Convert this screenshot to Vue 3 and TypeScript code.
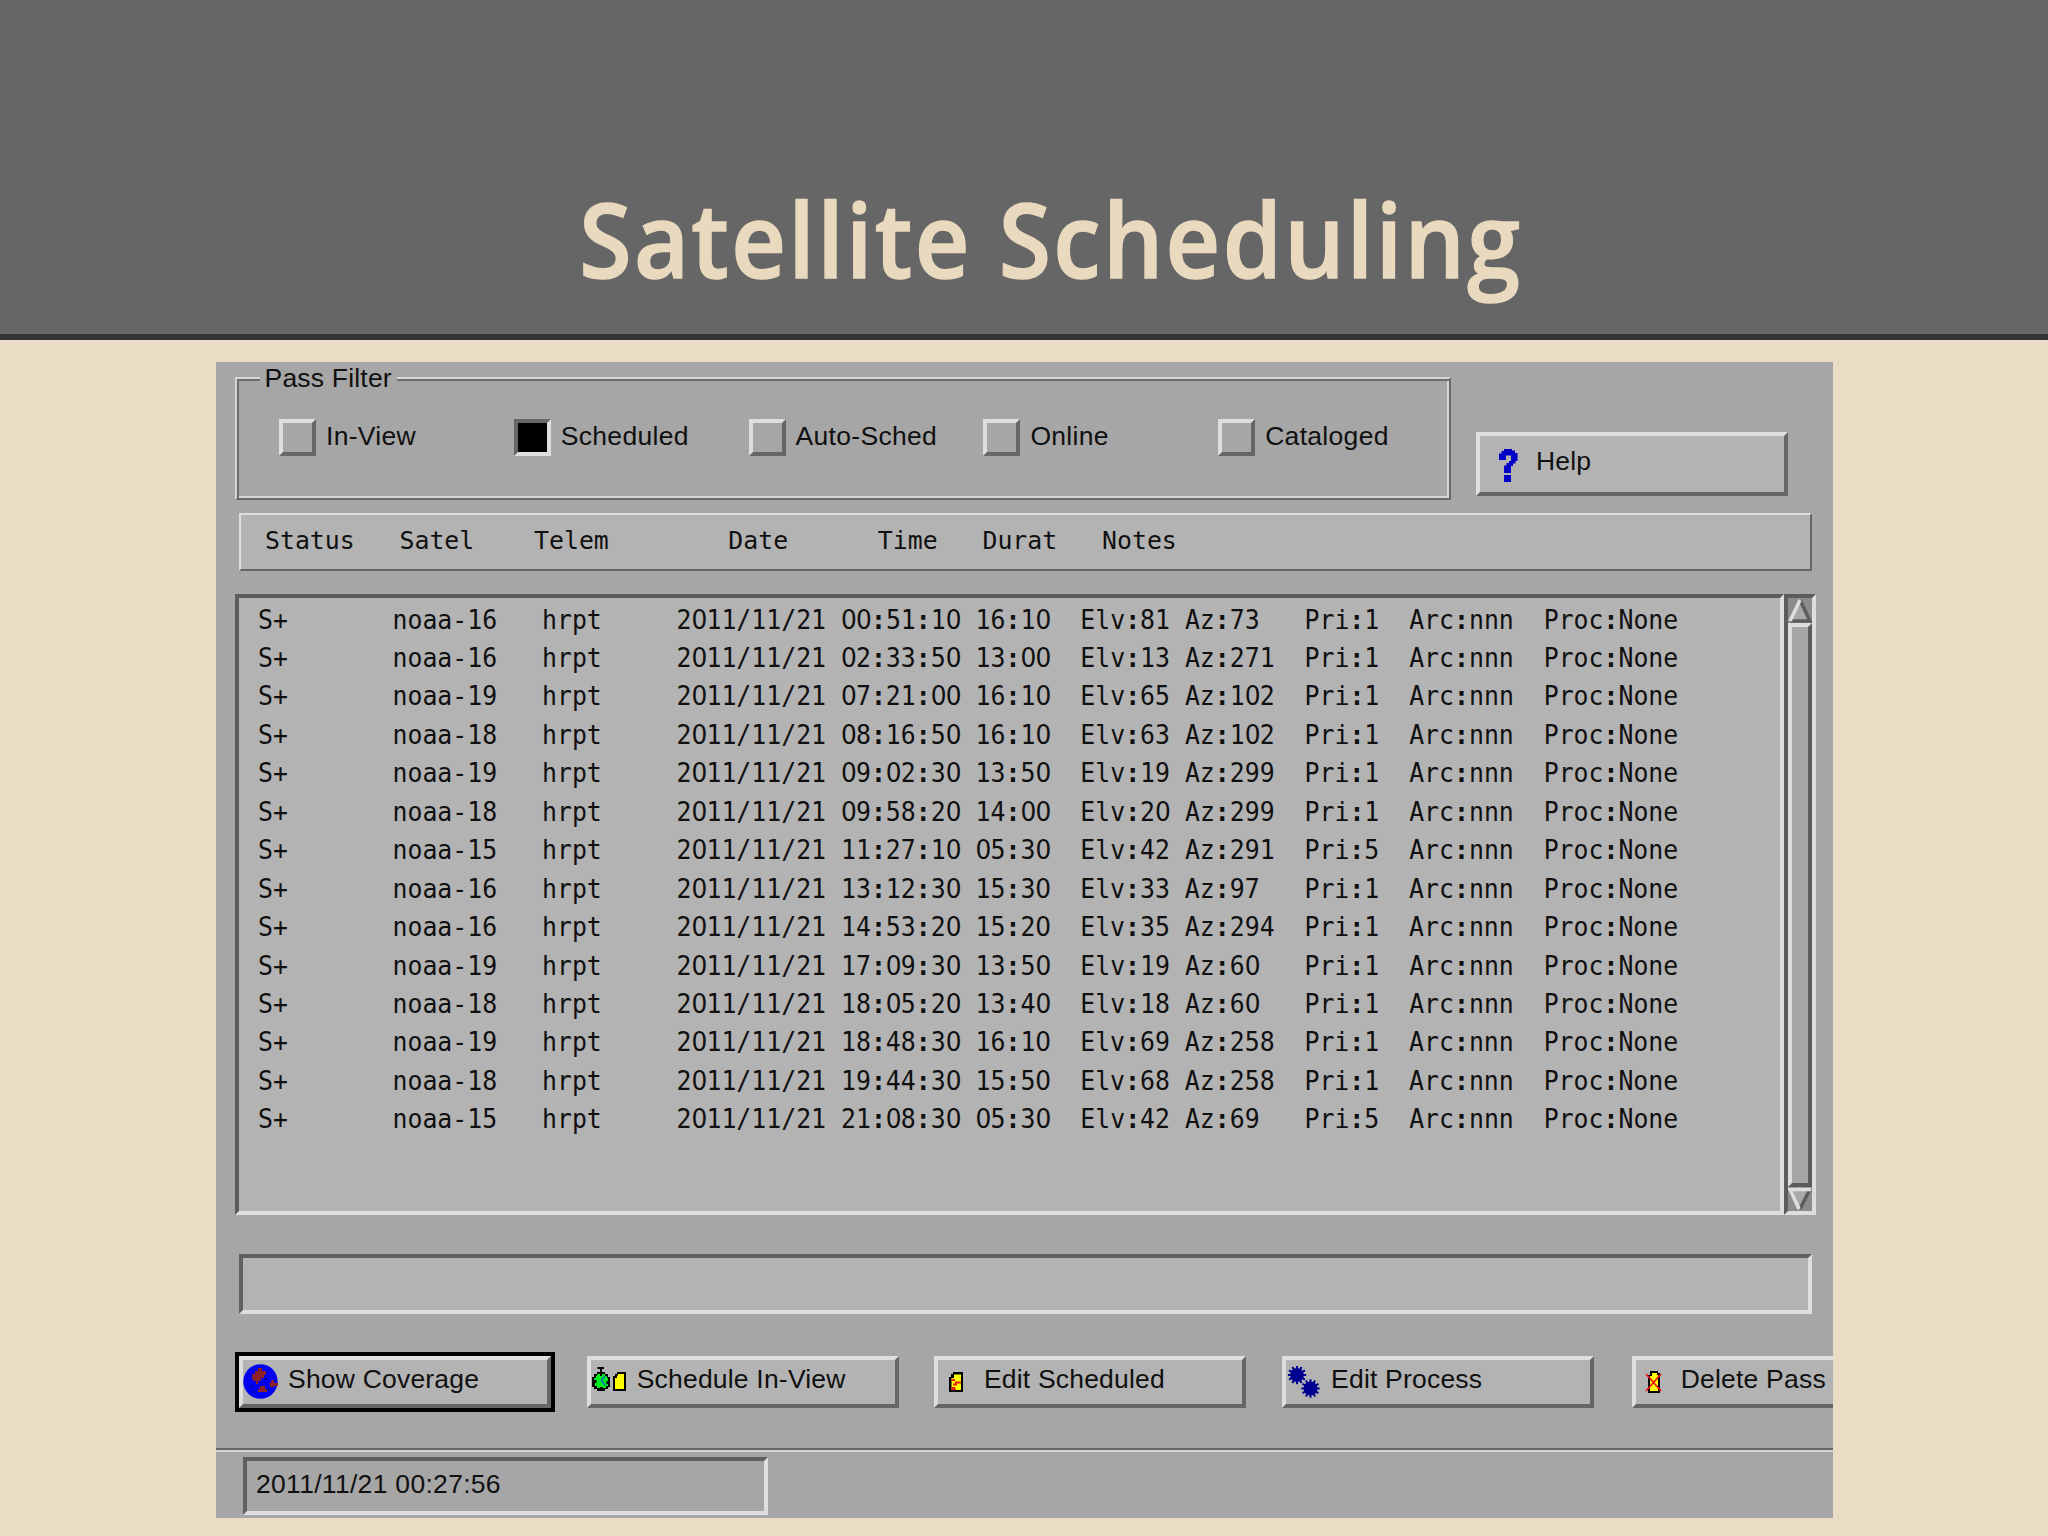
<script setup lang="ts">
interface Pass {
  sat: string
  time: string
  dur: string
  elv: number
  az: number
  pri: number
}

interface Token {
  text: string
  kind: string
}

const filters = [
  { label: 'In-View', on: false },
  { label: 'Scheduled', on: true },
  { label: 'Auto-Sched', on: false },
  { label: 'Online', on: false },
  { label: 'Cataloged', on: false },
]

const header =
  'Status'.padEnd(9) + 'Satel'.padEnd(9) + 'Telem'.padEnd(13) + 'Date'.padEnd(10) +
  'Time'.padEnd(7) + 'Durat'.padEnd(8) + 'Notes'

const pass = (sat: string, time: string, dur: string, elv: number, az: number, pri = 1): Pass =>
  ({ sat, time, dur, elv, az, pri })

const passes: Pass[] = [
  pass('noaa-16', '00:51:10', '16:10', 81, 73),
  pass('noaa-16', '02:33:50', '13:00', 13, 271),
  pass('noaa-19', '07:21:00', '16:10', 65, 102),
  pass('noaa-18', '08:16:50', '16:10', 63, 102),
  pass('noaa-19', '09:02:30', '13:50', 19, 299),
  pass('noaa-18', '09:58:20', '14:00', 20, 299),
  pass('noaa-15', '11:27:10', '05:30', 42, 291, 5),
  pass('noaa-16', '13:12:30', '15:30', 33, 97),
  pass('noaa-16', '14:53:20', '15:20', 35, 294),
  pass('noaa-19', '17:09:30', '13:50', 19, 60),
  pass('noaa-18', '18:05:20', '13:40', 18, 60),
  pass('noaa-19', '18:48:30', '16:10', 69, 258),
  pass('noaa-18', '19:44:30', '15:50', 68, 258),
  pass('noaa-15', '21:08:30', '05:30', 42, 69, 5),
]

const line = (p: Pass): string =>
  'S+'.padEnd(9) + p.sat.padEnd(10) + 'hrpt'.padEnd(9) + '2011/11/21 ' + p.time + ' ' + p.dur +
  '  Elv:' + p.elv + ' ' + ('Az:' + p.az).padEnd(8) + 'Pri:' + p.pri + '  Arc:nnn  Proc:None'

// Zeros are drawn open and colons heavy, so they get their own runs.
const tokens = (s: string): Token[] =>
  (s.match(/0+|:|[^0:]+/g) ?? []).map((text) => ({
    text,
    kind: text[0] === '0' ? 'zero' : text === ':' ? 'colon' : 'plain',
  }))

const rows = passes.map((p) => tokens(line(p)))

const gearTeeth = Array.from({ length: 12 }, (_, i) => i * 30)
</script>

<template>
  <main class="slide">
    <header class="banner"><h1>Satellite Scheduling</h1></header>
    <section class="window">
      <div class="top">
        <div class="filter">
          <span class="legend">Pass Filter</span>
          <label v-for="f in filters" :key="f.label" class="check">
            <i class="box" :class="{ on: f.on }"></i>{{ f.label }}
          </label>
        </div>
        <button class="btn help">
          <svg class="icon" width="20" height="34" viewBox="0 0 20 34" fill="#0000c8">
            <path d="M5 0H13V1.500H16V4H18.500V12H16.500V14.500H14V17H12V24H5V16.500H7.500V14H10V12H12V6.500H7V11H0V4.500H2.500V2H5Z" />
            <path d="M5 26H12V33H5Z" />
          </svg>
          <span>Help</span>
        </button>
      </div>

      <div class="columns mono">{{ header }}</div>

      <div class="listing">
        <div class="list">
          <div v-for="(row, i) in rows" :key="i" class="row mono"><span v-for="(t, j) in row" :key="j" :class="t.kind">{{ t.text }}</span></div>
        </div>
        <div class="scroll">
          <svg width="24" height="25" viewBox="0 0 24 25">
            <path d="M12 1L23 24H1Z" fill="#a8a8a8" />
            <path d="M12 2L22 23H2" fill="none" stroke="#5c5c5c" stroke-width="3.500" />
            <path d="M12 2L2 23" stroke="#dedede" stroke-width="3.500" />
          </svg>
          <div class="thumb"></div>
          <svg width="24" height="24" viewBox="0 0 24 24">
            <path d="M1 1H23L12 23Z" fill="#a8a8a8" />
            <path d="M22 2L12 22" stroke="#5c5c5c" stroke-width="3.500" />
            <path d="M23 2.500H2L11 22" fill="none" stroke="#dedede" stroke-width="3.500" />
          </svg>
        </div>
      </div>

      <div class="message"></div>

      <div class="actions">
        <div class="default">
          <button class="btn">
            <svg class="icon globe" width="36" height="36" viewBox="0 0 36 36">
              <ellipse cx="17.500" cy="17.500" rx="17.200" ry="17.200" fill="#0000f0" />
              <path d="M15 4H19V7H23V11H21V14H18V17H15V20H13V17H10V15H9V10H12V7H15ZM28 16H31V19H35V22H31V23H27V20H26V19H28ZM17 22H22V25H24V28H15V25H17Z" fill="#8c2028" />
              <path d="M21 14H24V16H21ZM7 21H9V24H7ZM24 24H26V26H24ZM10 27H12V29H10Z" fill="#0000a0" />
            </svg>
            <span>Show Coverage</span>
          </button>
        </div>
        <button class="btn">
          <svg class="icon timer" width="36" height="26" viewBox="0 0 36 26">
            <path d="M6.500 0H13V2H11V5H14V7H17V10H19V20H17V22H14V24H6V22H3V20H1V10H3V7H6V5H9V2H6.500Z" fill="#000" />
            <path d="M6 7H9V9H11V7H14V9H16V11H17V14H15.500V17H17V19H15V21H12V20H9V21H6V19H4V16H5.500V13H3V11H5V9H6Z" fill="#00ee20" />
            <path d="M14 9L10.500 13.500L14.500 18.500" fill="none" stroke="#0878a8" stroke-width="1.800" />
            <path d="M26 5H35V24H22V9H24V7H26Z" fill="#000" />
            <path d="M27 7H33V22H24V11H26V8.500H27Z" fill="#ffff00" />
          </svg>
          <span>Schedule In-View</span>
        </button>
        <button class="btn">
          <svg class="icon doc" width="15" height="21" viewBox="0 0 15 21">
            <path d="M4 0H14V20H0V5H2V2H4Z" fill="#000" />
            <path d="M5 2.500H12V18H2.500V6H5Z" fill="#ffff00" />
            <path d="M2.500 7H6V9H2.500ZM6 9.500H12V11.500H8V13.500H4V11.500H6ZM2.500 15H7V18H2.500Z" fill="#ee2010" />
            <path d="M6 15H8V16.500H6Z" fill="#ffff00" />
          </svg>
          <span>Edit Scheduled</span>
        </button>
        <button class="btn">
          <svg class="icon gears" width="32" height="32" viewBox="0 0 32 32" fill="#000090">
            <g v-for="c in [9, 22.500]" :key="c" :transform="`translate(${c} ${c})`">
              <circle r="6.900" />
              <rect v-for="a in gearTeeth" :key="a" x="-1" y="-9.200" width="2" height="4" :transform="`rotate(${a})`" />
            </g>
          </svg>
          <span>Edit Process</span>
        </button>
        <button class="btn last">
          <svg class="icon del" width="18" height="23" viewBox="0 0 18 23">
            <path d="M5 0H13V2H15V22H3V4H5Z" fill="#000" />
            <path d="M7 2H12V4H13V20H5V5H7Z" fill="#ffff00" />
            <path d="M1 3L16 20M16 3L1 20" stroke="#ee1010" stroke-width="1.700" />
            <path d="M7 2H12V6H7ZM6.500 16H12V20H6.500Z" fill="#ffff00" />
          </svg>
          <span>Delete Pass</span>
        </button>
      </div>

      <footer class="status"><div class="clock">2011/11/21 00:27:56</div></footer>
    </section>
  </main>
</template>

<style>
body {
  margin: 0;
  background: #eaddc6;
}
</style>

<style scoped>
.slide {
  width: 2048px;
  height: 1536px;
  overflow: hidden;
  background: #eaddc6;
  font: 26.5px/30px 'Liberation Sans', Arial, sans-serif;
  letter-spacing: 0.2px;
  color: #101010;
}
.banner {
  box-sizing: border-box;
  height: 340px;
  background: #666;
  border-bottom: 6px solid #333;
  padding-left: 53px;
  display: flex;
  justify-content: center;
  box-shadow: 0 2px 0 #f0dccf;
}
h1 {
  margin: 168px 0 0;
  font: 600 103px/140px 'Open Sans', 'Noto Sans', sans-serif;
  letter-spacing: 2.5px;
  white-space: nowrap;
  color: #e9d9be;
  -webkit-text-stroke: 1.5px #e9d9be;
  transform: scaleX(0.923);
}
.window {
  box-sizing: border-box;
  width: 1617px;
  height: 1156px;
  margin: 22px 0 0 216px;
  padding: 15px 0 0 19px;
  background: #a6a6a6;
  overflow: hidden;
  display: flex;
  flex-direction: column;
}
.window > * {
  flex: none;
}
.top {
  display: flex;
  height: 124px;
}
.filter {
  position: relative;
  box-sizing: border-box;
  width: 1216px;
  height: 123px;
  border: 2px solid;
  border-color: #d6d6d6 #686868 #686868 #d6d6d6;
  box-shadow: inset 2px 2px 0 #6c6c6c, inset -2px -2px 0 #d6d6d6;
  padding: 40px 0 0 42px;
  display: flex;
}
.legend {
  position: absolute;
  left: 22.5px;
  top: -16px;
  padding: 0 4px 0 5px;
  width: 128px;
  background: #a6a6a6;
  white-space: nowrap;
}
.check {
  flex: none;
  display: flex;
  width: 234.8px;
  line-height: 34px;
  letter-spacing: 0.3px;
  white-space: nowrap;
}
.box {
  box-sizing: border-box;
  width: 37px;
  height: 37px;
  margin-right: 10px;
  border: 4px solid;
  border-color: #dedede #666 #666 #dedede;
}
.box.on {
  background: #000;
  border-color: #666 #dedede #dedede #666;
}
.btn {
  box-sizing: border-box;
  flex: none;
  width: 312px;
  height: 52px;
  margin: 0;
  padding: 0;
  border: 4px solid;
  border-color: #dedede #666 #666 #dedede;
  background: #b3b3b3;
  color: inherit;
  font: inherit;
  letter-spacing: inherit;
  text-align: left;
  white-space: nowrap;
  display: flex;
}
.icon {
  flex: none;
}
.help {
  height: 64px;
  margin: 55px 0 0 25px;
}
.help .icon {
  margin: 13px 17px 0 19px;
}
.help span {
  margin-top: 10px;
}
.mono {
  font: 24.85px/38.46px 'DejaVu Sans Mono', monospace;
  letter-spacing: -0.01px;
  white-space: pre;
}
.columns {
  box-sizing: border-box;
  width: 1573px;
  height: 58px;
  margin: 12px 0 0 4px;
  padding: 7px 0 0 24px;
  border: 2px solid;
  border-color: #dedede #666 #666 #dedede;
  background: #b3b3b3;
}
.listing {
  display: flex;
  height: 621px;
  margin-top: 23px;
}
.list {
  box-sizing: border-box;
  width: 1549px;
  border: 4px solid;
  border-color: #5c5c5c #dedede #dedede #5c5c5c;
  background: #b3b3b3;
  padding: 3.5px 0 0 19px;
}
.row {
  height: 38.46px;
  transform: scaleY(1.06);
}
.zero {
  font-family: 'DejaVu Sans', sans-serif;
  letter-spacing: -0.034em;
}
.colon {
  font-weight: 700;
}
.scroll {
  box-sizing: border-box;
  width: 32px;
  border: 4px solid;
  border-color: #5c5c5c #dedede #dedede #5c5c5c;
  background: #8c8c8c;
  display: flex;
  flex-direction: column;
}
.thumb {
  flex: 1;
  border: 4px solid;
  border-color: #dedede #5c5c5c #5c5c5c #dedede;
  background: #a6a6a6;
}
.message {
  box-sizing: border-box;
  width: 1573px;
  height: 60px;
  margin: 39px 0 0 4px;
  border: 4px solid;
  border-color: #606060 #dedede #dedede #606060;
  background: #b3b3b3;
}
.actions {
  display: flex;
  gap: 35.7px;
  margin: 38px 0 0;
  height: 60px;
  align-items: center;
}
.default {
  flex: none;
  border: 4px solid #000;
  margin-right: -4px;
}
.btn.last {
  margin-left: 2px;
}
.actions span {
  margin-top: 4px;
}
.globe {
  margin: 4px 9px 0 0;
}
.timer {
  margin: 6.5px 10px 0 0;
}
.doc {
  margin: 12px 20px 0 10.5px;
}
.gears {
  margin: 6px 11.5px 0 1.5px;
}
.del {
  margin: 11px 18px 0 9px;
}
.status {
  box-sizing: border-box;
  margin: 36px 0 0 -19px;
  padding: 5px 0 0 27px;
  height: 70px;
  border-top: 2px solid #666;
  box-shadow: inset 0 2px 0 #d2d2d2;
}
.clock {
  box-sizing: border-box;
  width: 525px;
  height: 58px;
  margin-top: 2px;
  border: 4px solid;
  border-color: #606060 #dedede #dedede #606060;
  padding: 8px 0 0 9px;
  letter-spacing: 0.3px;
}
</style>
